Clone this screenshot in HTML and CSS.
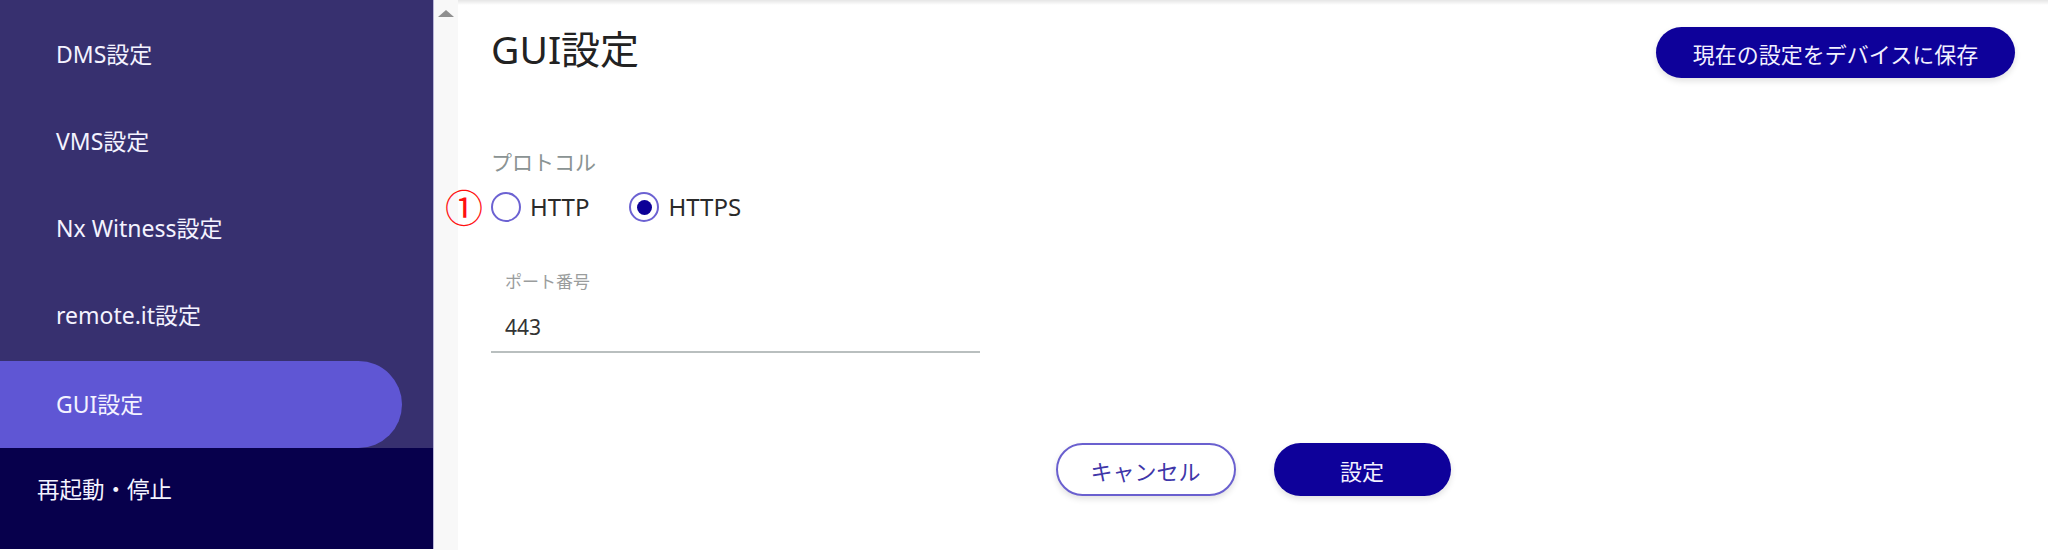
FILE: index.html
```html
<!DOCTYPE html>
<html lang="ja">
<head>
<meta charset="utf-8">
<title>GUI設定</title>
<link rel="stylesheet" href="styles.css">
</head>
<body>
<div class="app">
  <aside class="sidebar">
    <nav class="nav">
      <a class="nav-item">DMS設定</a>
      <a class="nav-item">VMS設定</a>
      <a class="nav-item">Nx Witness設定</a>
      <a class="nav-item">remote.it設定</a>
      <a class="nav-item active">GUI設定</a>
    </nav>
    <div class="nav-footer">
      <a class="footer-item">再起動・停止</a>
    </div>
  </aside>
  <div class="track"><span class="arrow-up"></span></div>
  <main class="main">
    <div class="topshade"></div>
    <header class="page-head">
      <h1 class="page-title">GUI設定</h1>
      <button class="btn btn-primary btn-save">現在の設定をデバイスに保存</button>
    </header>

    <div class="group-label">プロトコル</div>
    <div class="radio-row">
      <span class="annot">①</span>
      <label class="radio"><span class="radio-circle"></span><span class="radio-text">HTTP</span></label>
      <label class="radio checked"><span class="radio-circle"><span class="radio-dot"></span></span><span class="radio-text">HTTPS</span></label>
    </div>

    <div class="text-field">
      <div class="tf-label">ポート番号</div>
      <div class="tf-value">443</div>
    </div>

    <div class="actions">
      <button class="btn btn-outline">キャンセル</button>
      <button class="btn btn-primary btn-set">設定</button>
    </div>
  </main>
</div>
</body>
</html>
```

FILE: styles.css
```css
* { box-sizing: border-box; }

html, body {
  margin: 0;
  padding: 0;
  width: 2048px;
  height: 550px;
  overflow: hidden;
  background: #ffffff;
  font-family: "Noto Sans", "Noto Sans CJK JP", sans-serif;
}

.app {
  display: flex;
  height: 550px;
}

/* Sidebar */
.sidebar {
  width: 434px;
  height: 549px;
  display: flex;
  flex-direction: column;
  background: #37306f;
  border-right: 1px solid #b9b6d8;
}

.nav {
  display: flex;
  flex-direction: column;
  padding-top: 13px;
}

.nav-item {
  display: flex;
  align-items: center;
  height: 87px;
  padding-left: 56px;
  padding-bottom: 7px;
  font-size: 23px;
  color: #f4f3ff;
}

.nav-item.active {
  width: 402px;
  background: #5f56d4;
  border-radius: 0 44px 44px 0;
  padding-bottom: 4px;
}

.nav-footer {
  flex: 1;
  background: #07004c;
}

.footer-item {
  display: flex;
  align-items: center;
  height: 86px;
  padding-left: 37px;
  padding-bottom: 5px;
  font-size: 22.5px;
  color: #f4f3ff;
}

/* scrollbar track */
.track {
  width: 24px;
  background: #f8f8f8;
  display: flex;
  justify-content: center;
  padding-top: 10px;
}

.arrow-up {
  width: 0;
  height: 0;
  border-left: 8px solid transparent;
  border-right: 8px solid transparent;
  border-bottom: 7px solid #8f8f8f;
}

/* Main */
.main {
  flex: 1;
  position: relative;
  display: flex;
  flex-direction: column;
  padding: 27px 33px 0 33px;
}

.topshade {
  position: absolute;
  top: 0;
  left: 0;
  right: 0;
  height: 5px;
  background: linear-gradient(to bottom, rgba(0,0,0,0.10), rgba(0,0,0,0));
}

.page-head {
  display: flex;
  justify-content: space-between;
  align-items: center;
  height: 51px;
}

.page-title {
  margin: 0;
  font-weight: 400;
  font-size: 39px;
  line-height: 46px;
  color: #222222;
  margin-top: -8px;
}

.btn {
  font-family: "Noto Sans", "Noto Sans CJK JP", sans-serif;
  font-size: 22px;
  border-radius: 999px;
  cursor: pointer;
  box-shadow: 0 3px 6px rgba(0, 0, 0, 0.12);
}

.btn-primary {
  background: #0e019a;
  color: #f2f0ff;
  border: none;
}

.btn-save {
  width: 359px;
  height: 51px;
  padding: 0;
}

.group-label {
  margin-top: 69px;
  font-size: 21px;
  line-height: 30px;
  color: #8a9393;
}

.radio-row {
  position: relative;
  display: flex;
  align-items: center;
  gap: 40px;
  margin-top: 12px;
  height: 36px;
}

.annot {
  position: absolute;
  left: -46px;
  top: -2px;
  font-family: "Noto Sans CJK JP", sans-serif;
  font-size: 38px;
  line-height: 38px;
  color: #ff1010;
}

.radio {
  display: flex;
  align-items: center;
  gap: 9px;
}

.radio-circle {
  width: 30px;
  height: 30px;
  border: 2px solid #6c62d2;
  border-radius: 50%;
  display: flex;
  align-items: center;
  justify-content: center;
}

.radio-dot {
  width: 15px;
  height: 15px;
  border-radius: 50%;
  background: #0c0097;
}

.radio-text {
  font-size: 24px;
  color: #2a2a2a;
  line-height: 30px;
}

.text-field {
  width: 489px;
  margin-top: 45px;
  padding: 0 14px 9px 14px;
  border-bottom: 2px solid #b9bfbf;
}

.tf-label {
  font-size: 17px;
  line-height: 24px;
  color: #9a9d9d;
}

.tf-value {
  margin-top: 18px;
  font-size: 21px;
  line-height: 30px;
  color: #333333;
}

.actions {
  display: flex;
  justify-content: center;
  gap: 38px;
  margin-top: 90px;
}

.btn-outline {
  width: 180px;
  height: 53px;
  background: #ffffff;
  color: #3f37a9;
  border: 2px solid #6a60cf;
}

.btn-set {
  width: 177px;
  height: 53px;
}
```
